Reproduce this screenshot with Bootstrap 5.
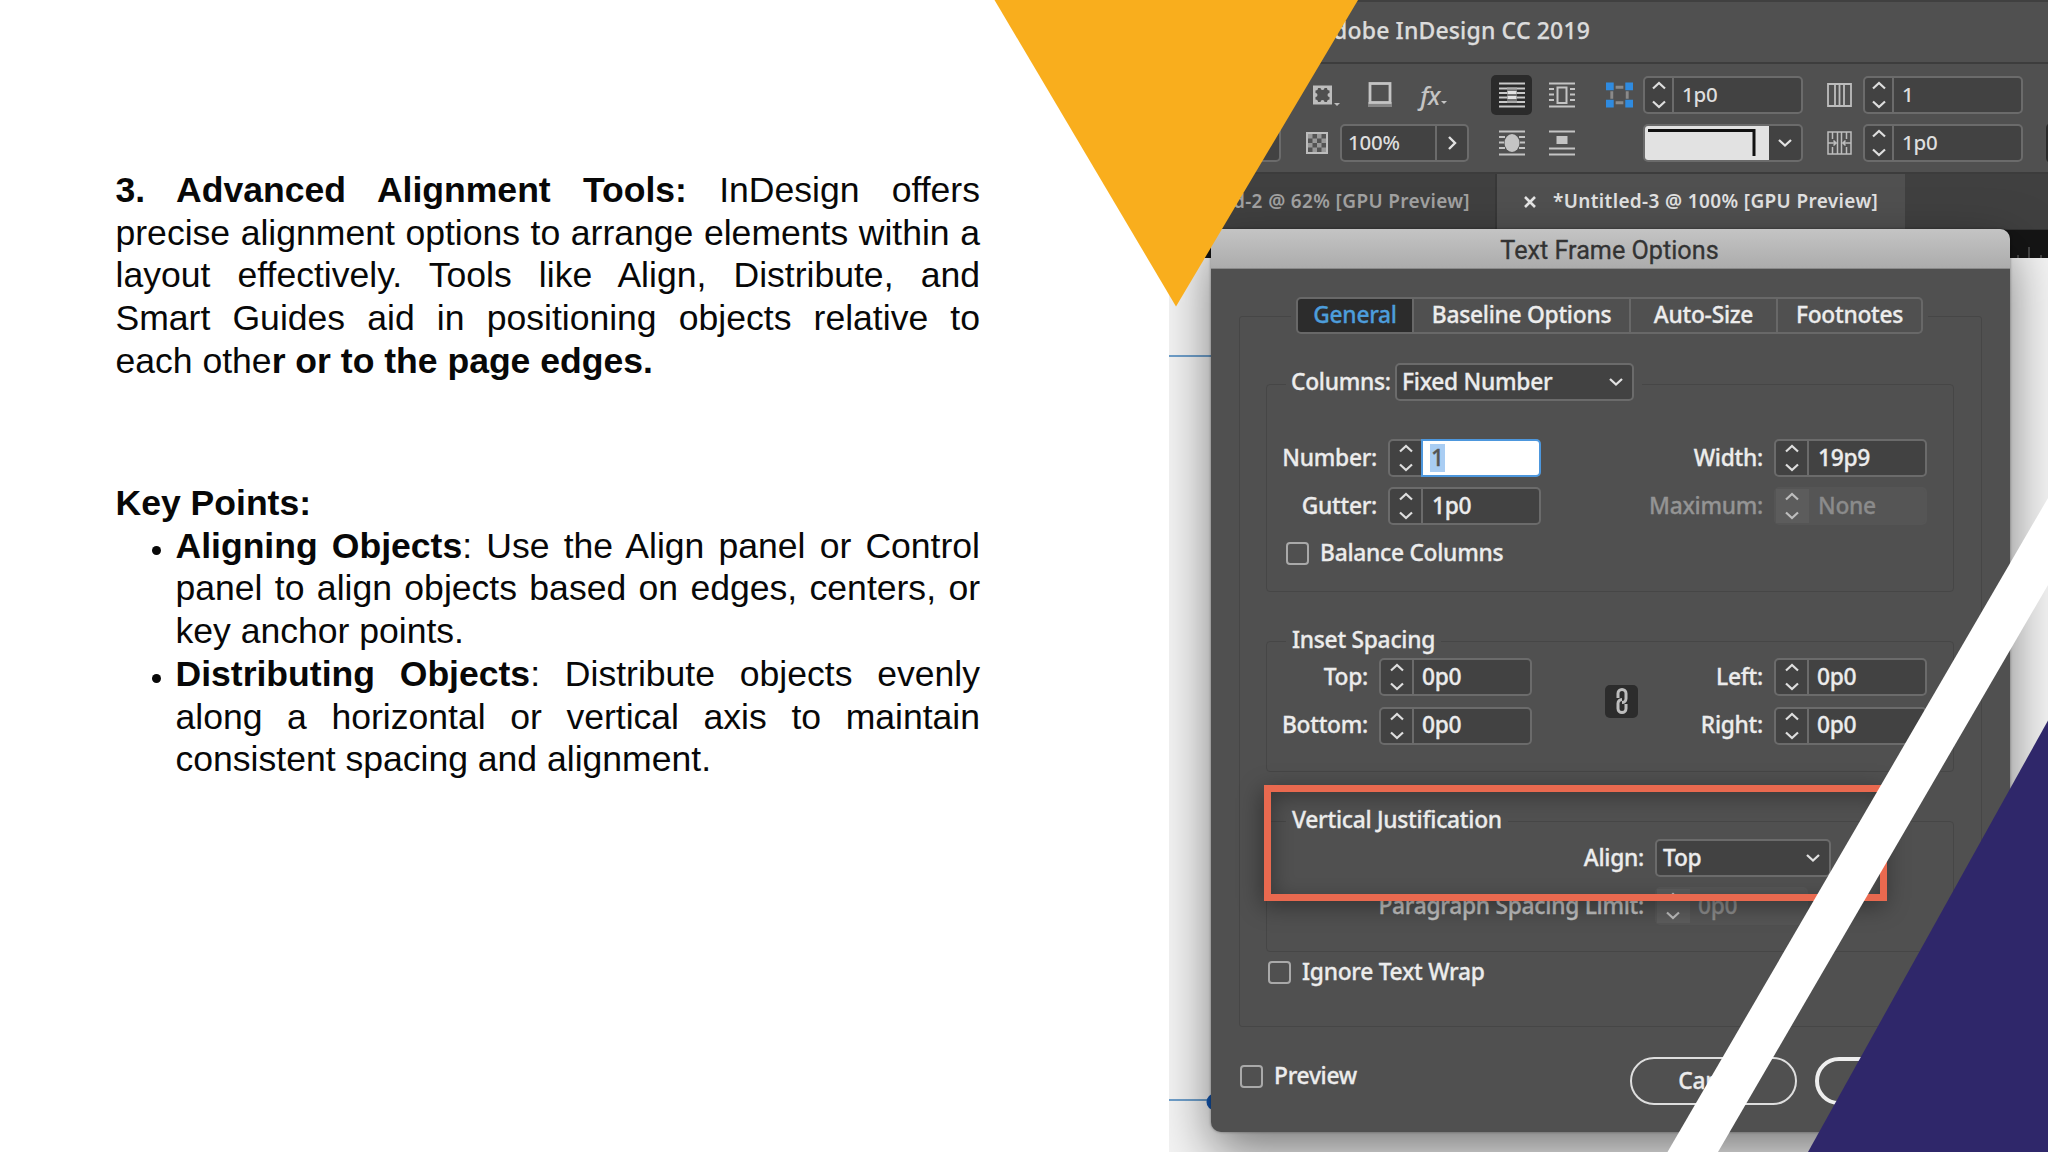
<!DOCTYPE html>
<html lang="en">
<head>
<meta charset="utf-8">
<title>Advanced Alignment Tools</title>
<link href="https://cdn.jsdelivr.net/npm/bootstrap@5.3.0/dist/css/bootstrap.min.css" rel="stylesheet">
<style>
body{width:2048px;height:1152px;background:#fff;font-family:"Liberation Sans",Arial,sans-serif}
.slide{width:2048px;height:1152px}
.copy{width:1169px;padding:169px 189px 0 115.5px;font-size:35.55px;line-height:42.7px;color:#080808;text-align:justify}
.copy p{margin:0 0 99.5px}
.points{list-style:none;padding-left:60px}
.points li::before{content:"";position:absolute;left:-24px;top:21px;width:9px;height:9px;border-radius:50%;background:#080808}
.shot{width:879px;height:1152px;background:#f4f4f4;font-family:"Noto Sans","Open Sans",sans-serif;color:#ececec;font-weight:500}
.shot svg{display:block;flex:none}
.appbar{height:64px;background:#505050;border-top:2px solid #404040;border-bottom:2px solid #3d3d3d;font-size:23px;color:#dcdcdc;padding:0 458px 3px 0;letter-spacing:.15px;-webkit-text-stroke:.25px #dcdcdc}
.tools{height:110px;background:#505050;border-bottom:2px solid #3c3c3c;padding-top:11px;gap:9px}
.trow{height:39px}
.lead-set{width:322px}
.fx{font-size:25px;line-height:24px;color:#c4c4c4;margin-left:27px;letter-spacing:-.5px}
.fx-end{margin-right:43px}
.i-shadow{margin-left:26px}
.wrapb{width:41px;height:40px;border-radius:5px}
.wrapb.on{background:#2b2b2b}
.i-wrap{margin-left:17px}
.i-frame{margin-left:31px}
.i-cols{margin-left:24px}
.cut-field{width:112px}
.i-check{margin:0 12px 0 25px}
.zoom-field{width:129px;margin-right:22px}
.zoom-more{width:32px;border-left:2px solid #6b6b6b}
.fld{height:38px;border:2px solid #6b6b6b;border-radius:5px;background:#424242}
.fld .stepper{width:33px;border-right:2px solid #6b6b6b;height:100%}
.fld .val{padding-left:9px;line-height:1}
.val.near{padding-left:8px}
.tools .fld{font-size:20.5px;color:#dedede;letter-spacing:-.2px}
.tools .fld .stepper{width:29px}
.tools .val{padding-left:8px}
.tools .zoom-field .val{padding-left:6px}
.tf{width:160px;margin-left:10px}
.tf-b{width:160px;margin-left:11px}
.tf-sw{width:160px;margin-left:68px}
.next-b{margin-left:23px}
.tabs{height:56px;background:#404040;font-size:19px;font-weight:600;letter-spacing:.36px;border-bottom:1px solid #333}
.tabs .idle{width:328px;padding-right:25px;color:#a2a2a2;border-right:2px solid #383838}
.tabs .cur{width:408px;background:#505050;padding-left:26px;color:#e2e2e2}
.ruler{height:28px;background:#151515}
.pasteboard{flex:1;background:#f4f4f4}
.guide{left:0;width:60px;height:2px;background:#6f9fca}
.g1{top:355px}.g2{top:1099px}
.knob{left:37px;top:1093px}
.dlg{left:42px;top:229px;width:799px;height:903px;border-radius:10px;background:#505050;box-shadow:0 20px 52px rgba(0,0,0,.5),0 0 3px rgba(0,0,0,.4);font-size:22.8px;letter-spacing:-.28px;-webkit-text-stroke:.3px currentColor}
.dlg-title{height:40px;border-radius:10px 10px 0 0;background:linear-gradient(#c4c4c4,#acacac);border-bottom:1px solid #8a8a8a;color:#333;font:400 25.2px Roboto,sans-serif;letter-spacing:0;padding:3px 2px 0 0}
.frame-outer{margin:47px 0 0 28px;width:743px;height:711px;border:1.5px solid #464646;border-radius:3px}
.grp{margin-left:26px;width:688px;border:1.5px solid #464646;border-radius:4px}
.grp-cols{margin-top:50px;height:208px}
.grp-b{margin-top:49px;height:131px}
.seg{margin:-20px 0 0 51px;padding:0 5px;background:#505050;width:637px;height:37px}
.seg>div{border:2px solid #686868;border-left-width:0;height:37px}
.seg>div:first-child{border-left-width:2px;border-radius:5px 0 0 5px;background:#2c2c2c;color:#4d9ddb;width:118px}
.seg>div:nth-child(2){width:217px}
.seg>div:nth-child(3){width:147px}
.seg>div:last-child{width:145px;border-radius:0 5px 5px 0}
.legend-row{margin:-22px 0 0 19px;padding:0 8px 0 5px;background:#505050;width:fit-content}
.legend-row .cap{width:104px}
.pick-cols{width:239px;padding:0 8px 0 5px}
.pick-align{width:176px;padding:0 8px 0 6px}
.legend-t{height:30px;line-height:30px;margin:-17px 0 0 19px;padding:0 6px;background:#505050;width:fit-content}
.line{height:38px}
.r1{margin-top:38px}.r2{margin-top:10px}.r3{margin-top:4px}
.pair{margin-top:3px}
.stack{gap:10.500px}
.lb{text-align:right;white-space:nowrap;margin-right:11px;line-height:1}
.lw-a{width:110px}.lw-b{width:222px}.lw-c{width:101px}.lw-d{width:125px}.lw-e{width:377px}
.dim{color:#949494}.half{color:#c0c0c0}
.w152{width:153px}
.hot{height:38px;margin:-2px;border:2px solid #4d97dd;border-radius:0 5px 5px 0;padding-left:7px;color:#555;background:#fff}
.hot span{background:#a9cdf3;line-height:28px;padding:0 1px}
.box{width:23px;height:23px;border:2px solid #a9a9a9;border-radius:4px;margin-right:11px;flex:none}
.opt{height:23px}
.opt-a{margin:17px 0 0 19px}
.opt-b{margin:9px 0 0 28px}
.off{border-color:#555;background:#555;color:#8b8b8b}
.off .stepper{background:#5c5c5c;border-color:#5c5c5c}
.linkb{width:33px;height:33px;margin-left:73px;border-radius:5px;background:#2c2c2c}
.foot{margin:30px 0 0 29px;height:48px}
.prev{width:390px;height:38px}
.pill{height:48px;border:2px solid #dedede;border-radius:24px;width:167px;padding-top:1px}
.pill.main{border:4px solid #eee;margin-left:18px}
.callout{left:53px;top:556px;width:623px;height:116px;border:7.5px solid #e9694f;box-shadow:-2px 5px 22px rgba(0,0,0,.38),inset 2px 5px 20px rgba(0,0,0,.3)}
.over{left:0;top:0;pointer-events:none}
</style>
</head>
<body class="overflow-hidden">
<svg width="0" height="0" class="position-absolute">
  <defs>
    <symbol id="step" viewBox="0 0 16 30"><path d="M2 8.500 8 3l6 5.500M2 21.500 8 27l6-5.500" fill="none" stroke="#dedede" stroke-width="2.200"/></symbol>
    <symbol id="down" viewBox="0 0 16 10"><path d="M2 2l6 5.500L14 2" fill="none" stroke="#e2e2e2" stroke-width="2.300"/></symbol>
  </defs>
</svg>
<main class="slide d-flex position-relative overflow-hidden">
  <section class="copy flex-shrink-0">
    <p><b>3. Advanced Alignment Tools:</b> InDesign offers precise alignment options to arrange elements within a layout effectively. Tools like Align, Distribute, and Smart Guides aid in positioning objects relative to each othe<b>r or to the page edges.</b></p>
    <div><b>Key Points:</b></div>
    <ul class="points mb-0">
      <li class="position-relative"><b>Aligning Objects</b>: Use the Align panel or Control panel to align objects based on edges, centers, or key anchor points.</li>
      <li class="position-relative"><b>Distributing Objects</b>: Distribute objects evenly along a horizontal or vertical axis to maintain consistent spacing and alignment.</li>
    </ul>
  </section>

  <section class="shot d-flex flex-column position-relative overflow-hidden flex-shrink-0">
    <div class="appbar d-flex align-items-center justify-content-end">Adobe InDesign CC 2019</div>
    <div class="tools d-flex flex-column">
      <div class="trow d-flex align-items-center">
        <div class="lead-set d-flex align-items-center justify-content-end">
          <svg width="30" height="24" viewBox="0 0 30 24"><path d="M2 2.500h19v19H2z" fill="#bdbdbd"/><path d="M7 5h2.500a2 2 0 0 0 4 0H16a2.500 2.500 0 0 0 2.500 2.500V10a2 2 0 0 0 0 4v2.500A2.500 2.500 0 0 0 16 19h-2.500a2 2 0 0 0-4 0H7a2.500 2.500 0 0 0-2.500-2.500V14a2 2 0 0 0 0-4V7.500A2.500 2.500 0 0 0 7 5z" fill="#505050"/><path d="M23 20h6l-3 3z" fill="#bdbdbd"/></svg>
          <svg class="i-shadow" width="26" height="27" viewBox="0 0 26 27"><path d="M1 21h24v5H1z" fill="#858585"/><rect x="3" y="2.500" width="20" height="19" fill="#505050" stroke="#c4c4c4" stroke-width="2.800"/></svg>
          <span class="fx fst-italic">fx</span>
          <svg class="fx-end" width="8" height="20" viewBox="0 0 8 20"><path d="M1 16h6l-3 3z" fill="#c4c4c4"/></svg>
        </div>
        <div class="wrapb on d-flex align-items-center justify-content-center flex-shrink-0"><svg width="26" height="26" viewBox="0 0 26 26"><path d="M0 1.500h26M0 6.500h26M0 11h26M0 15.500h26M0 20h26M0 24.500h26" stroke="#c8c8c8" stroke-width="1.800"/><path d="M8 5.500h10v15.500H8z" fill="#707070"/><path d="M8 6.500h10M8 20h10" stroke="#a8a8a8" stroke-width="1.800"/><path d="M8.500 10.500h9M8.500 15.500h9" stroke="#e2e2e2" stroke-width="3"/></svg></div>
        <svg class="i-wrap" width="26" height="26" viewBox="0 0 26 26"><path d="M0 1.500h26M0 7h5M0 12.500h5M0 18h5M21 7h5M21 12.500h5M21 18h5M0 24.500h26" stroke="#c4c4c4" stroke-width="2"/><rect x="8.500" y="5.500" width="9" height="15.500" fill="none" stroke="#c4c4c4" stroke-width="2"/></svg>
        <svg class="i-frame" width="27" height="28" viewBox="0 0 28 28"><path d="M10 6h8M10 22h8M6 10v8M22 10v8" fill="none" stroke="#8a8a8a" stroke-width="3"/><path d="M0 1h8v8H0zM20 1h8v8h-8zM0 19h8v8H0zM20 19h8v8h-8z" fill="#2f8be0"/></svg>
        <div class="fld tf d-flex align-items-center flex-shrink-0"><div class="stepper d-flex align-items-center justify-content-center"><svg width="16" height="30"><use href="#step"/></svg></div><div class="val">1p0</div></div>
        <svg class="i-cols" width="25" height="24" viewBox="0 0 25 24"><path d="M1 1h23v22H1zM8 1v22M12.500 1v22M17 1v22" fill="none" stroke="#bdbdbd" stroke-width="1.800"/></svg>
        <div class="fld tf-b d-flex align-items-center flex-shrink-0"><div class="stepper d-flex align-items-center justify-content-center"><svg width="16" height="30"><use href="#step"/></svg></div><div class="val">1</div></div>
      </div>
      <div class="trow d-flex align-items-center">
        <div class="lead-set d-flex align-items-center justify-content-end">
          <div class="fld cut-field"></div>
          <svg class="i-check" width="22" height="22" viewBox="0 0 22 22"><path d="M1 1h20v20H1z" fill="#555" stroke="#bdbdbd" stroke-width="2"/><path d="M2 2h4.500v4.500H2zM11 2h4.500v4.500H11zM6.500 6.500H11V11H6.500zM15.500 6.500H20V11h-4.500zM2 11h4.500v4.500H2zM11 11h4.500v4.500H11zM6.500 15.500H11V20H6.500zM15.500 15.500H20V20h-4.500z" fill="#999"/></svg>
          <div class="fld zoom-field d-flex align-items-center"><div class="val flex-grow-1">100%</div><div class="zoom-more h-100 d-flex align-items-center justify-content-center"><svg width="10" height="16" viewBox="0 0 10 16"><path d="M2 2l6 6-6 6" fill="none" stroke="#e2e2e2" stroke-width="2.400"/></svg></div></div>
        </div>
        <div class="wrapb d-flex align-items-center justify-content-center flex-shrink-0"><svg width="26" height="26" viewBox="0 0 26 26"><path d="M0 1.500h26M0 7h6M0 12.500h5M0 18h6M20 7h6M21 12.500h5M20 18h6M0 24.500h26" stroke="#c4c4c4" stroke-width="2"/><ellipse cx="13" cy="13" rx="7.500" ry="9" fill="#c4c4c4"/></svg></div>
        <svg class="i-wrap" width="26" height="26" viewBox="0 0 26 26"><path d="M0 1.500h26M0 18.500h26M0 24.500h26" stroke="#c4c4c4" stroke-width="2"/><path d="M7.500 6h11v8h-11z" fill="#c4c4c4"/></svg>
        <div class="fld tf-sw d-flex align-items-center overflow-hidden flex-shrink-0"><svg width="124" height="34" viewBox="0 0 124 34"><path d="M0 0h124v34H0z" fill="#e2e2e2"/><path d="M3 4.500h106V30" fill="none" stroke="#111" stroke-width="3"/></svg><div class="flex-grow-1 d-flex justify-content-center"><svg width="16" height="10"><use href="#down"/></svg></div></div>
        <svg class="i-cols" width="25" height="24" viewBox="0 0 25 24"><path d="M1 1h23v22H1zM10.500 1v22M14.500 1v22M1 12h8M24 12h-8M6.500 9.500 9 12l-2.500 2.500M18.500 9.500 16 12l2.500 2.500M5.500 1v7M5.500 16v7M19.500 1v7M19.500 16v7" fill="none" stroke="#bdbdbd" stroke-width="1.500"/></svg>
        <div class="fld tf-b d-flex align-items-center flex-shrink-0"><div class="stepper d-flex align-items-center justify-content-center"><svg width="16" height="30"><use href="#step"/></svg></div><div class="val">1p0</div></div>
        <div class="wrapb on next-b flex-shrink-0"></div>
      </div>
    </div>
    <div class="tabs d-flex">
      <div class="idle d-flex align-items-center justify-content-end text-nowrap">*Untitled-2 @ 62% [GPU Preview]</div>
      <div class="cur d-flex align-items-center text-nowrap"><svg width="14" height="14" viewBox="0 0 14 14"><path d="M2 2l10 10M12 2 2 12" stroke="#e6e6e6" stroke-width="2.600"/></svg><span class="ps-3">*Untitled-3 @ 100% [GPU Preview]</span></div>
    </div>
    <div class="ruler d-flex justify-content-end"><svg width="38" height="28" viewBox="0 0 38 28"><path d="M8 25v3M19 17v11M31 25v3" stroke="#777"/></svg></div>
    <div class="pasteboard"></div>

    <div class="guide g1 position-absolute"></div>
    <div class="guide g2 position-absolute"></div>
    <svg class="knob position-absolute" width="18" height="18"><circle cx="9" cy="9" r="8.500" fill="#1458b4"/></svg>

    <div class="dlg position-absolute">
      <div class="dlg-title d-flex align-items-center justify-content-center">Text Frame Options</div>
      <div class="frame-outer">
        <div class="seg d-flex text-nowrap">
          <div class="d-flex align-items-center justify-content-center">General</div>
          <div class="d-flex align-items-center justify-content-center">Baseline Options</div>
          <div class="d-flex align-items-center justify-content-center">Auto-Size</div>
          <div class="d-flex align-items-center justify-content-center">Footnotes</div>
        </div>
        <div class="grp grp-cols">
          <div class="legend-row d-flex align-items-center">
            <span class="cap">Columns:</span>
            <div class="fld pick-cols d-flex align-items-center justify-content-between"><span>Fixed Number</span><svg width="16" height="10"><use href="#down"/></svg></div>
          </div>
          <div class="line r1 d-flex align-items-center">
            <div class="lb lw-a">Number:</div>
            <div class="fld w152 d-flex align-items-center"><div class="stepper d-flex align-items-center justify-content-center"><svg width="16" height="30"><use href="#step"/></svg></div><div class="hot flex-grow-1 d-flex align-items-center"><span>1</span></div></div>
            <div class="lb lw-b">Width:</div>
            <div class="fld w152 d-flex align-items-center"><div class="stepper d-flex align-items-center justify-content-center"><svg width="16" height="30"><use href="#step"/></svg></div><div class="val">19p9</div></div>
          </div>
          <div class="line r2 d-flex align-items-center">
            <div class="lb lw-a">Gutter:</div>
            <div class="fld w152 d-flex align-items-center"><div class="stepper d-flex align-items-center justify-content-center"><svg width="16" height="30"><use href="#step"/></svg></div><div class="val">1p0</div></div>
            <div class="lb lw-b dim">Maximum:</div>
            <div class="fld off w152 d-flex align-items-center"><div class="stepper d-flex align-items-center justify-content-center"><svg width="16" height="30" opacity=".75"><use href="#step"/></svg></div><div class="val">None</div></div>
          </div>
          <div class="opt opt-a d-flex align-items-center"><span class="box"></span>Balance Columns</div>
        </div>

        <div class="grp grp-b">
          <div class="legend-t">Inset Spacing</div>
          <div class="pair d-flex align-items-center">
            <div class="stack d-flex flex-column">
              <div class="line d-flex align-items-center"><div class="lb lw-c">Top:</div><div class="fld w152 d-flex align-items-center"><div class="stepper d-flex align-items-center justify-content-center"><svg width="16" height="30"><use href="#step"/></svg></div><div class="val near">0p0</div></div></div>
              <div class="line d-flex align-items-center"><div class="lb lw-c">Bottom:</div><div class="fld w152 d-flex align-items-center"><div class="stepper d-flex align-items-center justify-content-center"><svg width="16" height="30"><use href="#step"/></svg></div><div class="val near">0p0</div></div></div>
            </div>
            <div class="linkb d-flex align-items-center justify-content-center"><svg width="14" height="28" viewBox="0 0 14 28"><path d="M3 11V6.500a4 4 0 0 1 8 0v5A4 4 0 0 1 7 15.500M11 17v4.500a4 4 0 0 1-8 0v-5a4 4 0 0 1 4-4" fill="none" stroke="#bdbdbd" stroke-width="3"/></svg></div>
            <div class="stack d-flex flex-column">
              <div class="line d-flex align-items-center"><div class="lb lw-d">Left:</div><div class="fld w152 d-flex align-items-center"><div class="stepper d-flex align-items-center justify-content-center"><svg width="16" height="30"><use href="#step"/></svg></div><div class="val near">0p0</div></div></div>
              <div class="line d-flex align-items-center"><div class="lb lw-d">Right:</div><div class="fld w152 d-flex align-items-center"><div class="stepper d-flex align-items-center justify-content-center"><svg width="16" height="30"><use href="#step"/></svg></div><div class="val near">0p0</div></div></div>
            </div>
          </div>
        </div>

        <div class="grp grp-b">
          <div class="legend-t">Vertical Justification</div>
          <div class="line r3 d-flex align-items-center"><div class="lb lw-e">Align:</div><div class="fld pick-align d-flex align-items-center justify-content-between"><span>Top</span><svg width="16" height="10"><use href="#down"/></svg></div></div>
          <div class="line r2 d-flex align-items-center"><div class="lb lw-e half">Paragraph Spacing Limit:</div><div class="fld off w152 d-flex align-items-center"><div class="stepper d-flex align-items-center justify-content-center"><svg width="16" height="30" opacity=".75"><use href="#step"/></svg></div><div class="val near">0p0</div></div></div>
        </div>
        <div class="opt opt-b d-flex align-items-center"><span class="box"></span>Ignore Text Wrap</div>
      </div>
      <div class="foot d-flex align-items-start">
        <div class="prev d-flex align-items-center"><span class="box"></span>Preview</div>
        <div class="pill d-flex align-items-center justify-content-center flex-shrink-0">Cancel</div>
        <div class="pill main d-flex align-items-center justify-content-center flex-shrink-0">OK</div>
      </div>
      <div class="callout position-absolute"></div>
    </div>
  </section>

  <svg class="over position-absolute" width="2048" height="1152" viewBox="0 0 2048 1152">
    <path d="M994.500 0H1358L1176 306.500z" fill="#f9ae1d"/>
    <path d="M1667.500 1152 2048 498V585L1718 1152z" fill="#fff"/>
    <path d="M1808 1152 2048 720.500V1152z" fill="#2f276a"/>
  </svg>
</main>
<script src="https://cdn.jsdelivr.net/npm/bootstrap@5.3.0/dist/js/bootstrap.bundle.min.js"></script>
</body>
</html>
